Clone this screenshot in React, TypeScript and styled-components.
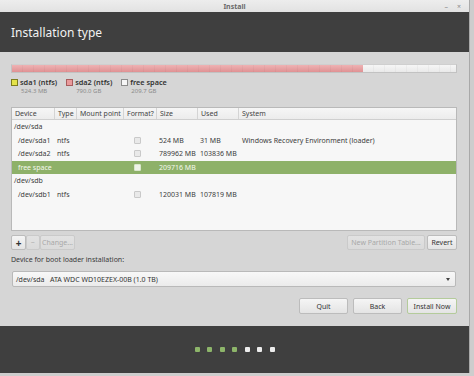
import styled, { createGlobalStyle, css } from 'styled-components';

const GlobalStyle = createGlobalStyle`
  html, body {
    margin: 0;
    padding: 0;
    background: #cdcdcd;
    font-family: "Noto Sans", "Open Sans", sans-serif;
  }
`

const Window = styled.div`
  width: 469px;
  height: 373px;
  display: flex;
  flex-direction: column;
  border-right: 1px solid #a9a9a9;
  background: #d6d6d6;
`
const TitleBar = styled.div`
  height: 12px;
  flex-shrink: 0;
  background: linear-gradient(#ededed, #e2e2e2);
  position: relative;
  display: flex;
  align-items: center;
  justify-content: center;
  font-size: 7px;
  font-weight: 700;
  color: #6a6a6a;
`
const WinControls = styled.div`
  position: absolute;
  right: 8px;
  top: 0;
  height: 12px;
  display: flex;
  align-items: center;
  gap: 9px;
  color: #8a8a8a;
  font-size: 7px;
  font-weight: 400;
`
const Header = styled.div`
  height: 40px;
  flex-shrink: 0;
  background: #3f3f3f;
  color: #f2f2f2;
  font-size: 12px;
  display: flex;
  align-items: center;
  padding-left: 11px;
  padding-top: 1px;
  box-sizing: border-box;
`
const Body = styled.div`
  flex: 1;
  display: flex;
  flex-direction: column;
  padding: 12px 12px 0 11px;
  color: #3a3a3a;
`
const Bar = styled.div`
  height: 7px;
  display: flex;
  border: 1px solid #c2c2c2;
  border-top-color: #cfcfcf;
  overflow: hidden;
`
const BarPart = styled.div<{ color: string }>`
  background-color: ${p => p.color};
  background-image: repeating-linear-gradient(90deg, transparent 0 10px, rgba(0,0,0,0.03) 10px 11px),
    linear-gradient(rgba(255,255,255,0.25), rgba(0,0,0,0.04));
`
const Legend = styled.div`
  display: flex;
  gap: 9px;
  margin-top: 4px;
`
const LegendItem = styled.div`
  display: flex;
  flex-direction: column;
`
const LegendTop = styled.div`
  display: flex;
  align-items: center;
  gap: 2px;
  font-size: 7.3px;
  font-weight: 600;
  color: #333;
  line-height: 10px;
`
const Swatch = styled.span<{ color: string; edge: string }>`
  width: 5px;
  height: 5px;
  background: ${p => p.color};
  border: 1px solid ${p => p.edge};
`
const LegendSize = styled.div`
  font-size: 6px;
  color: #8c8c8c;
  padding-left: 10px;
  line-height: 8px;
`
const Table = styled.div`
  margin-top: 12px;
  height: 122px;
  background: #f7f7f7;
  border: 1px solid #b9b9b9;
  font-size: 7px;
`
const cols = css`
  display: grid;
  grid-template-columns: 42px 22px 47px 33px 41px 41px 1fr;
  align-items: center;
`
const HeadRow = styled.div`
  ${cols};
  height: 11px;
  background: linear-gradient(#f6f6f6, #ececec);
  border-bottom: 1px solid #cfcfcf;
  color: #444;
`
const HeadCell = styled.div<{ first?: boolean }>`
  height: 11px;
  line-height: 11px;
  padding-left: 3px;
  border-left: ${p => (p.first ? 'none' : '1px solid #d4d4d4')};
  white-space: nowrap;
  overflow: hidden;
`
const Row = styled.div<{ selected?: boolean }>`
  ${cols};
  height: 13.5px;
  line-height: 13.5px;
  color: #3c3c3c;
  ${p => p.selected && css`
    background: #8eb169;
    color: #f4f8ee;
  `}
`
const Cell = styled.div<{ indent?: number }>`
  padding-left: ${p => p.indent ?? 4}px;
  white-space: nowrap;
`
const CheckCell = styled.div`
  display: flex;
  justify-content: center;
  padding-right: 4px;
`
const Check = styled.span<{ light?: boolean }>`
  width: 5px;
  height: 5px;
  border: 1px solid ${p => (p.light ? '#d9e6cb' : '#c9c9c9')};
  background: ${p => (p.light ? '#eef3e8' : '#e9e9e9')};
  border-radius: 1px;
`
const ToolRow = styled.div`
  display: flex;
  justify-content: space-between;
  margin-top: 4px;
`
const Group = styled.div`
  display: flex;
`
const Button = styled.div<{ disabled?: boolean; w?: number; accent?: boolean }>`
  height: 15px;
  ${p => p.w && css`width: ${p.w}px;`}
  padding: 0 3px;
  box-sizing: border-box;
  display: flex;
  align-items: center;
  justify-content: center;
  font-size: 7px;
  color: ${p => (p.disabled ? '#a8a8a8' : '#333')};
  background: linear-gradient(#f5f5f5, #e4e4e4);
  border: 1px solid ${p => (p.accent ? '#b4cb9b' : '#bcbcbc')};
  border-radius: 2px;
  white-space: nowrap;
  ${p => p.disabled && css`
    background: linear-gradient(#e2e2e2, #dadada);
    border-color: #cacaca;
  `}
`
const Label = styled.div`
  font-size: 7px;
  color: #3a3a3a;
  margin-top: 5px;
  line-height: 10px;
`
const Combo = styled.div`
  margin-top: 6px;
  height: 16px;
  margin-left: 1px;
  margin-right: 1px;
  box-sizing: border-box;
  border: 1px solid #b9b9b9;
  border-radius: 2px;
  background: linear-gradient(#f8f8f8, #ebebeb);
  display: flex;
  align-items: center;
  padding: 0 5px 0 3px;
  font-size: 7px;
  color: #333;
  white-space: pre;
`
const ComboText = styled.span`
  flex: 1;
`
const Arrow = styled.span`
  width: 0;
  height: 0;
  border-left: 2.5px solid transparent;
  border-right: 2.5px solid transparent;
  border-top: 3px solid #444;
`
const Actions = styled.div`
  display: flex;
  justify-content: flex-end;
  gap: 5px;
  margin-top: 11px;
`
const Footer = styled.div`
  height: 47px;
  flex-shrink: 0;
  background: #3f3f3f;
  display: flex;
  align-items: center;
  justify-content: center;
  gap: 7.5px;
`
const Dot = styled.span<{ done?: boolean }>`
  width: 5px;
  height: 5px;
  border-radius: 1px;
  background: ${p => (p.done ? '#8db56a' : '#ececec')};
`

type Part = { dev: string; type?: string; size?: string; used?: string; system?: string; indent: number; check?: boolean; selected?: boolean };

const parts: Part[] = [
  { dev: '/dev/sda', indent: 2 },
  { dev: '/dev/sda1', type: 'ntfs', size: '524 MB', used: '31 MB', system: 'Windows Recovery Environment (loader)', indent: 6, check: true },
  { dev: '/dev/sda2', type: 'ntfs', size: '789962 MB', used: '103836 MB', indent: 6, check: true },
  { dev: 'free space', size: '209716 MB', indent: 6, check: true, selected: true },
  { dev: '/dev/sdb', indent: 2 },
  { dev: '/dev/sdb1', type: 'ntfs', size: '120031 MB', used: '107819 MB', indent: 6, check: true },
];

export default function App() {
  return (
    <>
      <GlobalStyle />
      <Window>
        <TitleBar>
          Install
          <WinControls><span>–</span><span>×</span></WinControls>
        </TitleBar>
        <Header>Installation type</Header>
        <Body>
          <Bar>
            <BarPart color="#e9989a" style={{ width: '79%' }} />
            <BarPart color="#f3f3f3" style={{ flex: 1 }} />
          </Bar>
          <Legend>
            <LegendItem>
              <LegendTop><Swatch color="#e4e34a" edge="#7d7d1e" />sda1 (ntfs)</LegendTop>
              <LegendSize>524.3 MB</LegendSize>
            </LegendItem>
            <LegendItem>
              <LegendTop><Swatch color="#e99a9b" edge="#a85c5d" />sda2 (ntfs)</LegendTop>
              <LegendSize>790.0 GB</LegendSize>
            </LegendItem>
            <LegendItem>
              <LegendTop><Swatch color="#f6f6f6" edge="#8c8c8c" />free space</LegendTop>
              <LegendSize>209.7 GB</LegendSize>
            </LegendItem>
          </Legend>
          <Table>
            <HeadRow>
              <HeadCell first>Device</HeadCell>
              <HeadCell>Type</HeadCell>
              <HeadCell>Mount point</HeadCell>
              <HeadCell>Format?</HeadCell>
              <HeadCell>Size</HeadCell>
              <HeadCell>Used</HeadCell>
              <HeadCell>System</HeadCell>
            </HeadRow>
            {parts.map((p, i) => (
              <Row key={i} selected={p.selected}>
                <Cell indent={p.indent}>{p.dev}</Cell>
                <Cell indent={3}>{p.type}</Cell>
                <Cell />
                <CheckCell>{p.check && <Check light={p.selected} />}</CheckCell>
                <Cell indent={3}>{p.size}</Cell>
                <Cell indent={3}>{p.used}</Cell>
                <Cell indent={4}>{p.system}</Cell>
              </Row>
            ))}
          </Table>
          <ToolRow>
            <Group>
              <Button w={15} style={{ fontSize: 10, fontWeight: 700 }}>+</Button>
              <Button w={14} disabled>−</Button>
              <Button w={35} disabled>Change...</Button>
            </Group>
            <Group style={{ gap: 2 }}>
              <Button w={78} disabled>New Partition Table...</Button>
              <Button w={30}>Revert</Button>
            </Group>
          </ToolRow>
          <Label>Device for boot loader installation:</Label>
          <Combo>
            <ComboText>/dev/sda   ATA WDC WD10EZEX-00B (1.0 TB)</ComboText>
            <Arrow />
          </Combo>
          <Actions>
            <Button w={49} style={{ height: 16 }}>Quit</Button>
            <Button w={49} style={{ height: 16 }}>Back</Button>
            <Button w={50} style={{ height: 16 }} accent>Install Now</Button>
          </Actions>
        </Body>
        <Footer>
          <Dot done /><Dot done /><Dot done /><Dot done />
          <Dot /><Dot /><Dot />
        </Footer>
      </Window>
    </>
  );
}
